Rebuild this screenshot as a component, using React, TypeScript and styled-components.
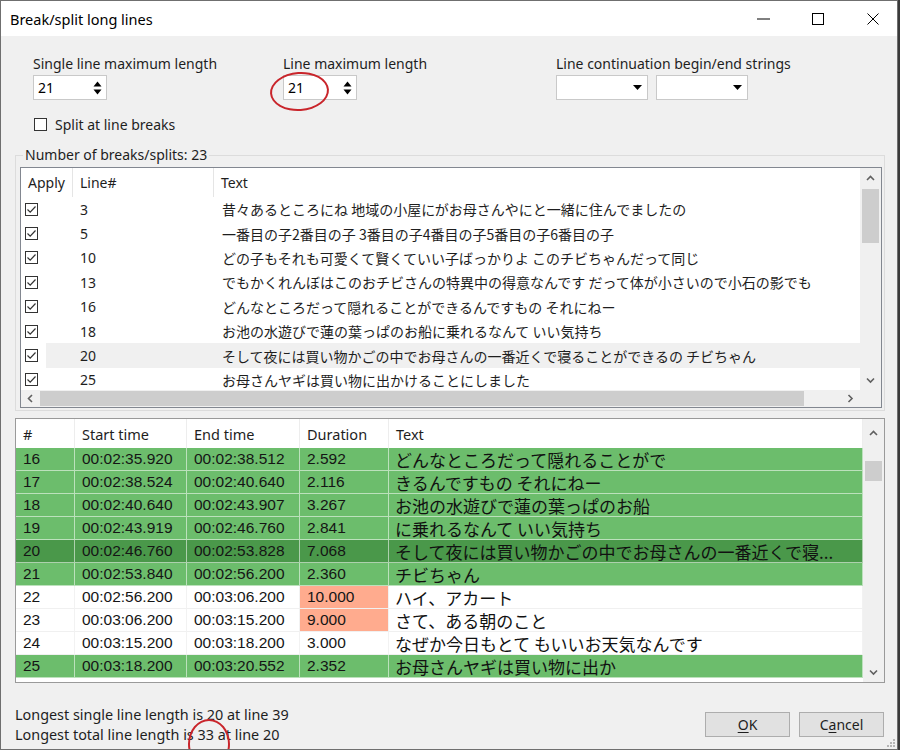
import React from 'react';
import styled, { createGlobalStyle, css } from 'styled-components';

const UI_FONT = `"Noto Sans", "Liberation Sans", sans-serif`;
const JP_FONT = `"Noto Sans CJK JP", "Noto Sans", sans-serif`;
const GRID_FONT = `"Liberation Sans", Arial, sans-serif`;

type BreakItem = { line: number; text: string; hover?: boolean };
type RowKind = 'green' | 'selected' | 'plain';
type Sub = { no: number; start: string; end: string; dur: string; text: string; kind: RowKind; warn?: boolean };

const breaks: BreakItem[] = [
  { line: 3, text: '昔々あるところにね 地域の小屋にがお母さんやにと一緒に住んでましたの' },
  { line: 5, text: '一番目の子2番目の子 3番目の子4番目の子5番目の子6番目の子' },
  { line: 10, text: 'どの子もそれも可愛くて賢くていい子ばっかりよ このチビちゃんだって同じ' },
  { line: 13, text: 'でもかくれんぼはこのおチビさんの特異中の得意なんです だって体が小さいので小石の影でも' },
  { line: 16, text: 'どんなところだって隠れることができるんですもの それにねー' },
  { line: 18, text: 'お池の水遊びで蓮の葉っぱのお船に乗れるなんて いい気持ち' },
  { line: 20, text: 'そして夜には買い物かごの中でお母さんの一番近くで寝ることができるの チビちゃん', hover: true },
  { line: 25, text: 'お母さんヤギは買い物に出かけることにしました' },
];

const subs: Sub[] = [
  { no: 16, start: '00:02:35.920', end: '00:02:38.512', dur: '2.592', text: 'どんなところだって隠れることがで', kind: 'green' },
  { no: 17, start: '00:02:38.524', end: '00:02:40.640', dur: '2.116', text: 'きるんですもの それにねー', kind: 'green' },
  { no: 18, start: '00:02:40.640', end: '00:02:43.907', dur: '3.267', text: 'お池の水遊びで蓮の葉っぱのお船', kind: 'green' },
  { no: 19, start: '00:02:43.919', end: '00:02:46.760', dur: '2.841', text: 'に乗れるなんて いい気持ち', kind: 'green' },
  { no: 20, start: '00:02:46.760', end: '00:02:53.828', dur: '7.068', text: 'そして夜には買い物かごの中でお母さんの一番近くで寝...', kind: 'selected' },
  { no: 21, start: '00:02:53.840', end: '00:02:56.200', dur: '2.360', text: 'チビちゃん', kind: 'green' },
  { no: 22, start: '00:02:56.200', end: '00:03:06.200', dur: '10.000', text: 'ハイ、アカート', kind: 'plain', warn: true },
  { no: 23, start: '00:03:06.200', end: '00:03:15.200', dur: '9.000', text: 'さて、ある朝のこと', kind: 'plain', warn: true },
  { no: 24, start: '00:03:15.200', end: '00:03:18.200', dur: '3.000', text: 'なぜか今日もとて もいいお天気なんです', kind: 'plain' },
  { no: 25, start: '00:03:18.200', end: '00:03:20.552', dur: '2.352', text: 'お母さんヤギは買い物に出か', kind: 'green' },
];

const GlobalStyle = createGlobalStyle`
  html, body { margin: 0; padding: 0; background: #3a3a3a; }
  body { font-family: ${UI_FONT}; color: #1b1b1b; }
  * { box-sizing: border-box; }
`;

const Window = styled.div`
  position: relative;
  width: 898px;
  height: 750px;
  background: #f0f0f0;
  border: 1px solid #6f6f6f;
  display: flex;
  flex-direction: column;
  overflow: hidden;
`;

const TitleBar = styled.div`
  height: 35px;
  flex: none;
  background: #fff;
  display: flex;
  align-items: center;
  padding-left: 9px;
`;

const Title = styled.div`
  flex: 1;
  font-size: 14.5px;
  color: #000;
`;

const CaptionButton = styled.div`
  width: 55px;
  height: 35px;
  display: flex;
  align-items: center;
  justify-content: center;
  padding-left: 7px;
`;

const Body = styled.div`
  flex: 1;
  display: flex;
  flex-direction: column;
  padding: 0 12px 0 14px;
`;

const TopRow = styled.div`
  display: flex;
  padding: 19px 0 0 18px;
`;

const Field = styled.div<{ $w?: number }>`
  width: ${({ $w }) => ($w ? `${$w}px` : 'auto')};
  display: flex;
  flex-direction: column;
  gap: 2px;
`;

const Label = styled.div`
  font-size: 14px;
  line-height: 18px;
  color: #1e1e1e;
  white-space: nowrap;
`;

const Spin = styled.div<{ $marked?: boolean }>`
  position: relative;
  width: 74px;
  height: 25px;
  background: #fff;
  border: 1px solid #c9c9c9;
  display: flex;
  align-items: center;
  justify-content: space-between;
  padding: 0 4px 0 4px;
  font-size: 14px;
  color: #000;

  ${({ $marked }) =>
    $marked &&
    css`
      &::after {
        content: '';
        position: absolute;
        left: -14px;
        top: -4px;
        width: 55px;
        height: 35px;
        border: 2.5px solid #c9252b;
        border-radius: 50%;
        transform: rotate(-4deg);
      }
    `}
`;

const ComboRow = styled.div`
  display: flex;
  gap: 8px;
`;

const Combo = styled.div`
  width: 92px;
  height: 25px;
  background: #fff;
  border: 1px solid #c9c9c9;
  display: flex;
  align-items: center;
  justify-content: flex-end;
  padding-right: 5px;
`;

const CheckRow = styled.label`
  display: flex;
  align-items: center;
  gap: 8px;
  height: 18px;
  margin: 15px 0 0 19px;
  font-size: 14px;
  color: #1e1e1e;
`;

const CheckBox = styled.span`
  width: 13px;
  height: 13px;
  border: 1px solid #333;
  background: #fff;
  display: inline-flex;
  align-items: center;
  justify-content: center;
`;

const Group = styled.fieldset`
  margin: 13px 0 0 0;
  padding: 3px 2px 2px 4px;
  border: 1px solid #dcdcdc;
  min-width: 0;
`;

const Legend = styled.legend`
  font-size: 14px;
  line-height: 18px;
  padding: 0 2px;
  margin-left: 3px;
  color: #1e1e1e;
`;

const ListBox = styled.div`
  height: 241px;
  border: 1px solid #828790;
  background: #fff;
  display: grid;
  grid-template-columns: 1fr 21px;
  grid-template-rows: 1fr 17px;
  overflow: hidden;
`;

const ListBody = styled.div`
  overflow: hidden;
  min-width: 0;
`;

const listCols = css`
  display: grid;
  grid-template-columns: 52px 141px 1fr;
`;

const ListHeader = styled.div`
  ${listCols};
  height: 29px;
  font-size: 14px;
  color: #1e1e1e;
`;

const HeaderCell = styled.div<{ $sep?: boolean }>`
  display: flex;
  align-items: center;
  padding-left: 7px;
  border-right: ${({ $sep }) => ($sep ? '1px solid #e5e5e5' : 'none')};
`;

const ListRow = styled.div<{ $hover?: boolean }>`
  ${listCols};
  height: 24.4px;
  align-items: center;
  font-size: 14px;
  color: #1e1e1e;
  background: ${({ $hover }) => ($hover ? 'linear-gradient(to right, transparent 25px, #f0f0f0 25px)' : 'transparent')};
`;

const ListCell = styled.div<{ $jp?: boolean }>`
  padding-left: ${({ $jp }) => ($jp ? 8 : 7)}px;
  white-space: nowrap;
  overflow: hidden;
  font-family: ${({ $jp }) => ($jp ? JP_FONT : UI_FONT)};
`;

const RowCheck = styled.span`
  width: 13px;
  height: 13px;
  margin-left: 4px;
  border: 1px solid #333;
  background: #fff;
  display: flex;
  align-items: center;
  justify-content: center;
`;

const VScroll = styled.div`
  background: #f0f0f0;
  display: flex;
  flex-direction: column;
  align-items: center;
`;

const ArrowBox = styled.div<{ $h?: number; $w?: number }>`
  width: ${({ $w }) => ($w ? `${$w}px` : '100%')};
  height: ${({ $h }) => $h ?? 20}px;
  display: flex;
  align-items: center;
  justify-content: center;
  flex: none;
`;

const ThumbV = styled.div<{ $top: number; $h: number }>`
  width: 17px;
  height: ${({ $h }) => $h}px;
  margin-top: ${({ $top }) => $top}px;
  background: #cdcdcd;
  flex: none;
`;

const Track = styled.div`
  flex: 1;
  width: 100%;
  display: flex;
  flex-direction: column;
  align-items: center;
`;

const HScroll = styled.div`
  background: #f0f0f0;
  display: flex;
  align-items: center;
`;

const ThumbH = styled.div`
  flex: 1;
  height: 15px;
  margin: 0 36px 0 0;
  background: #cdcdcd;
`;

const Corner = styled.div`
  background: #f0f0f0;
`;

const Grid = styled.div`
  margin-top: 7px;
  height: 265px;
  border: 1px solid #9a9a9a;
  background: #fff;
  display: grid;
  grid-template-columns: 1fr 21px;
  overflow: hidden;
`;

const GridBody = styled.div`
  min-width: 0;
  overflow: hidden;
`;

const gridCols = css`
  display: grid;
  grid-template-columns: 59px 112px 113px 89px 474px;
`;

const GridHeader = styled.div`
  ${gridCols};
  height: 29px;
  font-family: ${UI_FONT};
  font-size: 14.5px;
  color: #1e1e1e;
`;

const GridHeaderCell = styled.div`
  display: flex;
  align-items: center;
  padding-left: 7px;
  border-right: 1px solid #ededed;
`;

const rowBg: Record<RowKind, string> = {
  green: '#6cbd6c',
  selected: '#4a984a',
  plain: '#ffffff',
};

const GridRow = styled.div<{ $kind: RowKind }>`
  ${gridCols};
  height: 23px;
  background: ${({ $kind }) => rowBg[$kind]};
  font-family: ${GRID_FONT};
  font-size: 15.5px;
  color: #151515;
`;

const GridCell = styled.div<{ $kind: RowKind; $warn?: boolean; $jp?: boolean }>`
  display: flex;
  align-items: center;
  padding-left: ${({ $jp }) => ($jp ? 6 : 7)}px;
  border-right: 1px solid ${({ $kind }) => ($kind === 'plain' ? '#f2f2f2' : 'rgba(255,255,255,0.55)')};
  border-bottom: 1px solid ${({ $kind }) => ($kind === 'plain' ? '#f0f0f0' : 'rgba(255,255,255,0.55)')};
  background: ${({ $warn }) => ($warn ? '#ffab8e' : 'transparent')};
  white-space: nowrap;
  overflow: hidden;
  min-width: 0;
  ${({ $jp }) =>
    $jp &&
    css`
      font-family: ${JP_FONT};
      font-size: 17px;
      color: #111;
    `}
`;

const Footer = styled.div`
  margin-top: 22px;
  display: flex;
  justify-content: space-between;
  align-items: flex-start;
`;

const Stats = styled.div`
  font-size: 14.4px;
  line-height: 20px;
  color: #1e1e1e;
`;

const Circled = styled.span`
  position: relative;

  &::after {
    content: '';
    position: absolute;
    left: -10px;
    top: -6px;
    width: 38px;
    height: 46px;
    border: 2.5px solid #c9252b;
    border-radius: 50%;
  }
`;

const Buttons = styled.div`
  display: flex;
  gap: 9px;
  margin: 7px 1px 0 0;
`;

const Button = styled.button`
  width: 85px;
  height: 25px;
  background: #e1e1e1;
  border: 1px solid #adadad;
  font-family: ${UI_FONT};
  font-size: 14px;
  color: #1e1e1e;
  padding: 0;
`;

const Grip = styled.svg`
  position: absolute;
  right: 2px;
  bottom: 2px;
`;

const Underlined = styled.span`
  text-decoration: underline;
  text-underline-offset: 2px;
`;

const Chevron = ({ dir }: { dir: 'up' | 'down' | 'left' | 'right' }) => {
  const d = {
    up: 'M1 5 L4.5 1.5 L8 5',
    down: 'M1 1.5 L4.5 5 L8 1.5',
    left: 'M5 1 L1.5 4.5 L5 8',
    right: 'M1.5 1 L5 4.5 L1.5 8',
  }[dir];
  const horiz = dir === 'left' || dir === 'right';
  return (
    <svg width={horiz ? 7 : 9} height={horiz ? 9 : 7} viewBox={horiz ? '0 0 7 9' : '0 0 9 7'}>
      <path d={d} fill="none" stroke="#606060" strokeWidth="1.6" />
    </svg>
  );
};

const SpinArrows = () => (
  <svg width="9" height="14" viewBox="0 0 9 14">
    <path d="M0.5 5.5 L4.5 0.5 L8.5 5.5 Z" fill="#000" />
    <path d="M0.5 8.5 L4.5 13.5 L8.5 8.5 Z" fill="#000" />
  </svg>
);

const DropArrow = () => (
  <svg width="9" height="5" viewBox="0 0 9 5">
    <path d="M0 0 L9 0 L4.5 5 Z" fill="#000" />
  </svg>
);

const Check = () => (
  <svg width="11" height="11" viewBox="0 0 11 11">
    <path d="M1.5 5.5 L4.2 8.2 L9.5 2.5" fill="none" stroke="#333" strokeWidth="1.2" />
  </svg>
);

export default function App() {
  return (
    <>
      <GlobalStyle />
      <Window>
        <TitleBar>
          <Title>Break/split long lines</Title>
          <CaptionButton>
            <svg width="13" height="2" viewBox="0 0 13 2">
              <path d="M0 1 H13" stroke="#000" strokeWidth="1" />
            </svg>
          </CaptionButton>
          <CaptionButton>
            <svg width="12" height="12" viewBox="0 0 12 12">
              <rect x="0.5" y="0.5" width="11" height="11" fill="none" stroke="#000" strokeWidth="1" />
            </svg>
          </CaptionButton>
          <CaptionButton>
            <svg width="12" height="12" viewBox="0 0 12 12">
              <path d="M0.5 0.5 L11.5 11.5 M11.5 0.5 L0.5 11.5" stroke="#000" strokeWidth="1" />
            </svg>
          </CaptionButton>
        </TitleBar>

        <Body>
          <TopRow>
            <Field $w={250}>
              <Label>Single line maximum length</Label>
              <Spin>
                21
                <SpinArrows />
              </Spin>
            </Field>
            <Field $w={273}>
              <Label>Line maximum length</Label>
              <Spin $marked>
                21
                <SpinArrows />
              </Spin>
            </Field>
            <Field>
              <Label>Line continuation begin/end strings</Label>
              <ComboRow>
                <Combo>
                  <DropArrow />
                </Combo>
                <Combo>
                  <DropArrow />
                </Combo>
              </ComboRow>
            </Field>
          </TopRow>

          <CheckRow>
            <CheckBox />
            Split at line breaks
          </CheckRow>

          <Group>
            <Legend>Number of breaks/splits: 23</Legend>
            <ListBox>
              <ListBody>
                <ListHeader>
                  <HeaderCell $sep>Apply</HeaderCell>
                  <HeaderCell $sep>Line#</HeaderCell>
                  <HeaderCell>Text</HeaderCell>
                </ListHeader>
                {breaks.map(b => (
                  <ListRow key={b.line} $hover={b.hover}>
                    <RowCheck>
                      <Check />
                    </RowCheck>
                    <ListCell>{b.line}</ListCell>
                    <ListCell $jp>{b.text}</ListCell>
                  </ListRow>
                ))}
              </ListBody>
              <VScroll>
                <ArrowBox>
                  <Chevron dir="up" />
                </ArrowBox>
                <Track>
                  <ThumbV $top={1} $h={54} />
                </Track>
                <ArrowBox>
                  <Chevron dir="down" />
                </ArrowBox>
              </VScroll>
              <HScroll>
                <ArrowBox $h={17} $w={19}>
                  <Chevron dir="left" />
                </ArrowBox>
                <ThumbH />
                <ArrowBox $h={17} $w={20}>
                  <Chevron dir="right" />
                </ArrowBox>
              </HScroll>
              <Corner />
            </ListBox>
          </Group>

          <Grid>
            <GridBody>
              <GridHeader>
                <GridHeaderCell>#</GridHeaderCell>
                <GridHeaderCell>Start time</GridHeaderCell>
                <GridHeaderCell>End time</GridHeaderCell>
                <GridHeaderCell>Duration</GridHeaderCell>
                <GridHeaderCell>Text</GridHeaderCell>
              </GridHeader>
              {subs.map(s => (
                <GridRow key={s.no} $kind={s.kind}>
                  <GridCell $kind={s.kind}>{s.no}</GridCell>
                  <GridCell $kind={s.kind}>{s.start}</GridCell>
                  <GridCell $kind={s.kind}>{s.end}</GridCell>
                  <GridCell $kind={s.kind} $warn={s.warn}>
                    {s.dur}
                  </GridCell>
                  <GridCell $kind={s.kind} $jp>
                    {s.text}
                  </GridCell>
                </GridRow>
              ))}
            </GridBody>
            <VScroll>
              <ArrowBox $h={29}>
                <Chevron dir="up" />
              </ArrowBox>
              <Track>
                <ThumbV $top={13} $h={20} />
              </Track>
              <ArrowBox>
                <Chevron dir="down" />
              </ArrowBox>
            </VScroll>
          </Grid>

          <Footer>
            <Stats>
              <div>Longest single line length is 20 at line 39</div>
              <div>
                Longest total line length is <Circled>33</Circled> at line 20
              </div>
            </Stats>
            <Buttons>
              <Button>
                <Underlined>O</Underlined>K
              </Button>
              <Button>
                C<Underlined>a</Underlined>ncel
              </Button>
            </Buttons>
          </Footer>
        </Body>
        <Grip width="8" height="8" viewBox="0 0 8 8">
          <rect x="6" y="0" width="2" height="2" fill="#b5b5b5" />
          <rect x="3" y="3" width="2" height="2" fill="#b5b5b5" />
          <rect x="6" y="3" width="2" height="2" fill="#b5b5b5" />
          <rect x="0" y="6" width="2" height="2" fill="#b5b5b5" />
          <rect x="3" y="6" width="2" height="2" fill="#b5b5b5" />
          <rect x="6" y="6" width="2" height="2" fill="#b5b5b5" />
        </Grip>
      </Window>
    </>
  );
}
